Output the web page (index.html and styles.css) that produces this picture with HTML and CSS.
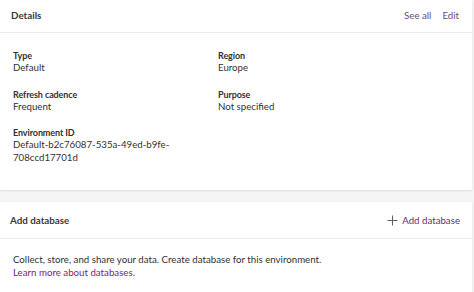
FILE: index.html
```html
<!DOCTYPE html>
<html>
<head>
<meta charset="utf-8">
<link rel="stylesheet" href="styles.css">
</head>
<body>
<div class="page">
  <section class="card details">
    <header class="card-head">
      <h2 class="card-title">Details</h2>
      <div class="actions">
        <a class="link">See all</a>
        <a class="link">Edit</a>
      </div>
    </header>
    <div class="fields">
      <div class="field">
        <div class="label">Type</div>
        <div class="value">Default</div>
      </div>
      <div class="field">
        <div class="label">Region</div>
        <div class="value">Europe</div>
      </div>
      <div class="field">
        <div class="label">Refresh cadence</div>
        <div class="value">Frequent</div>
      </div>
      <div class="field">
        <div class="label">Purpose</div>
        <div class="value">Not specified</div>
      </div>
      <div class="field">
        <div class="label">Environment ID</div>
        <div class="value id">Default-b2c76087-535a-49ed-b9fe-708ccd17701d</div>
      </div>
    </div>
  </section>
  <section class="card db">
    <header class="card-head">
      <h2 class="card-title">Add database</h2>
      <a class="link add">
        <svg class="plus" width="11" height="11" viewBox="0 0 11 11"><path d="M5.5 0.5V10.5M0.5 5.5H10.5" stroke="currentColor" stroke-width="1" fill="none"/></svg>
        Add database
      </a>
    </header>
    <div class="db-body">
      <p class="text">Collect, store, and share your data. Create database for this environment.</p>
      <a class="link learn">Learn more about databases.</a>
    </div>
  </section>
</div>
</body>
</html>
```
FILE: styles.css
```css
* { box-sizing: border-box; }
html, body { margin: 0; padding: 0; }
body {
  background: #f5f5f5;
  font-family: "Lato", "Open Sans", sans-serif;
  color: #323130;
  width: 474px;
  height: 292px;
  overflow: hidden;
}
.page {
  display: flex;
  flex-direction: column;
  gap: 12px;
  padding-right: 2px;
}
.card {
  background: #fff;
  box-shadow: 0 0.5px 2px rgba(0,0,0,0.1);
}
.details { height: 190px; }
.card-head {
  display: flex;
  align-items: center;
  justify-content: space-between;
  height: 33px;
  padding: 0 13px 3px 11px;
  border-bottom: 1px solid #edebe9;
}
.card-title {
  margin: 0;
  font-size: 9.8px;
  font-weight: 700;
  color: #3b3a39;
}
.actions { display: flex; gap: 11px; }
.link {
  color: #742774;
  font-size: 9.7px;
  text-decoration: none;
}
.actions .link { color: #6b4a78; }
.fields {
  display: grid;
  grid-template-columns: 205px 1fr;
  row-gap: 14.5px;
  padding: 17px 13px 0;
}
.label {
  font-size: 9px;
  font-weight: 700;
  letter-spacing: -0.1px;
  color: #323130;
  line-height: 11px;
}
.value {
  font-size: 9.7px;
  line-height: 13px;
  color: #323130;
}
.id { width: 158px; }
.db .card-head { height: 37px; padding: 0 12px 0 10px; }
.add { display: flex; align-items: center; gap: 4px; }
.plus { color: #605e5c; }
.db-body { padding: 14px 13px 20px; }
.text { margin: 0; font-size: 9.7px; line-height: 13px; }
.learn { display: block; line-height: 13px; }
```
